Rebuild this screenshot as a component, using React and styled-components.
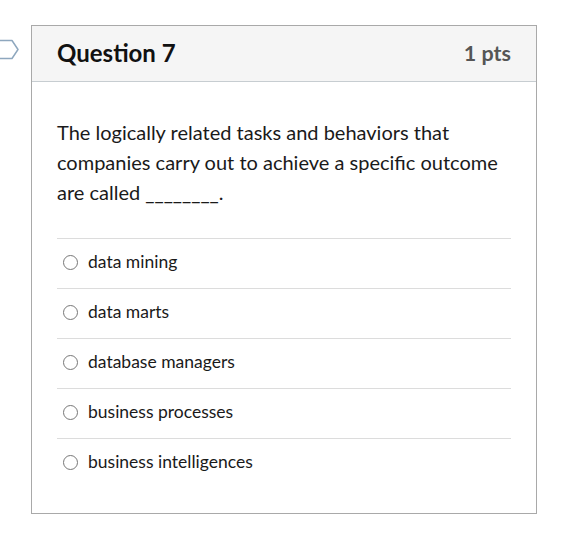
import React from "react";
import styled, { createGlobalStyle } from "styled-components";

const Global = createGlobalStyle`
  html, body { margin: 0; padding: 0; background: #fff; }
  body { font-family: Lato, "Open Sans", "Liberation Sans", sans-serif; color: #2d3b45; }
  * { box-sizing: border-box; }
`;

const Page = styled.div`
  position: relative;
  padding: 25px 0 0 31px;
  width: 581px;
  height: 558px;
`;

const Flag = styled.svg`
  position: absolute;
  left: 0;
  top: 39px;
`;

const Card = styled.div`
  width: 506px;
  height: 489px;
  border: 1px solid #a9a9a9;
  display: flex;
  flex-direction: column;
`;

const Header = styled.div`
  height: 57px;
  background: #f5f5f5;
  border-bottom: 1px solid #c7cdd1;
  display: flex;
  align-items: center;
  justify-content: space-between;
  padding: 0 25px 0 25px;
`;

const Title = styled.div`
  font-size: 24px;
  font-weight: 700;
  color: #111;
  margin-top: -2px;
`;

const Points = styled.div`
  font-size: 21.5px;
  font-weight: 700;
  color: #555;
  margin-top: -2px;
`;

const Body = styled.div`
  padding: 35px 25px 25px 25px;
`;

const Prompt = styled.p`
  margin: 0 0 31px 0;
  font-size: 20px;
  line-height: 30px;
  color: #1a1a1a;
`;

const Answers = styled.div`
  display: flex;
  flex-direction: column;
`;

const Answer = styled.label`
  height: 50px;
  border-top: 1px solid #dcdcdc;
  display: flex;
  align-items: center;
  padding: 0 0 4px 6px;
  gap: 10px;
  font-size: 17.5px;
  color: #1a1a1a;
`;

const Radio = styled.span`
  width: 15px;
  height: 15px;
  border-radius: 50%;
  border: 1px solid #777;
  background: #fff;
  flex: none;
  margin-top: 1px;
`;

const options = [
  "data mining",
  "data marts",
  "database managers",
  "business processes",
  "business intelligences",
];

export default function App() {
  return (
    <>
      <Global />
      <Page>
        <Flag width="22" height="22" viewBox="0 0 22 22">
          <path
            d="M-4 1.5 H12 L18 10.5 L12 19.5 H-4"
            fill="none"
            stroke="#8ea7be"
            strokeWidth="1.5"
            strokeLinejoin="round"
          />
        </Flag>
        <Card>
          <Header>
            <Title>Question 7</Title>
            <Points>1 pts</Points>
          </Header>
          <Body>
            <Prompt>
              The logically related tasks and behaviors that companies carry out
              to achieve a specific outcome are called ________.
            </Prompt>
            <Answers>
              {options.map((o) => (
                <Answer key={o}>
                  <Radio />
                  {o}
                </Answer>
              ))}
            </Answers>
          </Body>
        </Card>
      </Page>
    </>
  );
}
